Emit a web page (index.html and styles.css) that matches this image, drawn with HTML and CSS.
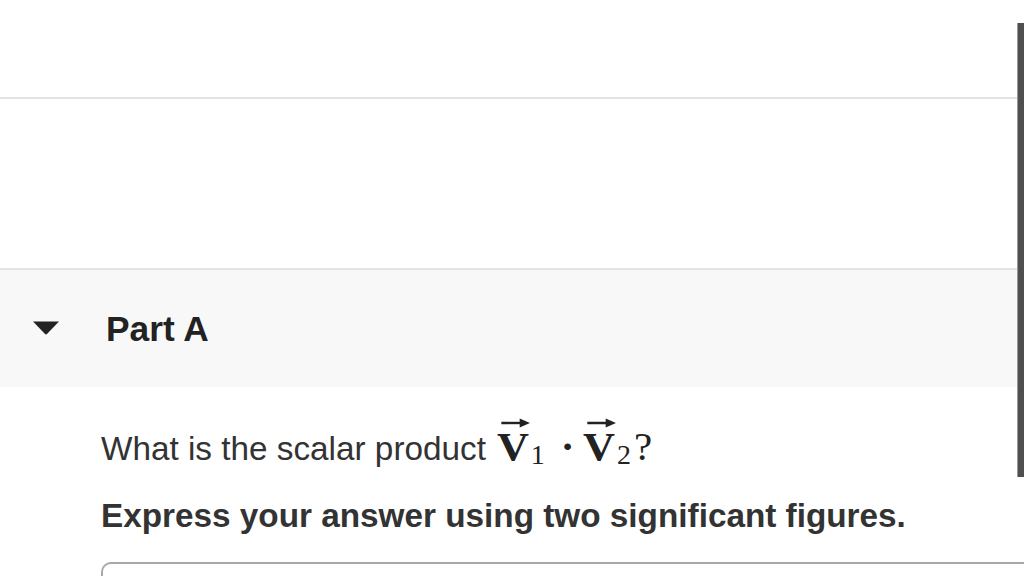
FILE: index.html
```html
<!DOCTYPE html>
<html lang="en">
<head>
<meta charset="utf-8">
<title>Part A</title>
<link rel="stylesheet" href="styles.css">
</head>
<body>
<div class="page">
  <div class="top-area"></div>
  <div class="gap-area"></div>
  <section class="part">
    <div class="part-header">
      <svg class="caret" width="28" height="15" viewBox="0 0 28 15" aria-hidden="true"><path d="M1 1.5 L27 1.5 L15.2 13.8 Q14 15 12.8 13.8 Z" fill="#222"/></svg>
      <h2 class="part-title">Part A</h2>
    </div>
    <div class="part-body">
      <p class="question">What is the scalar product <span class="math"><span class="vec">V<svg class="arrow" width="30" height="10" viewBox="0 0 30 10" aria-hidden="true"><path d="M2 5 H24" stroke="#222" stroke-width="2.4"/><path d="M19 0.5 L28.5 5 L19 9.5 Z" fill="#222"/></svg></span><sub class="sub">1</sub><span class="dot">·</span><span class="vec">V<svg class="arrow" width="30" height="10" viewBox="0 0 30 10" aria-hidden="true"><path d="M2 5 H24" stroke="#222" stroke-width="2.4"/><path d="M19 0.5 L28.5 5 L19 9.5 Z" fill="#222"/></svg></span><sub class="sub">2</sub><span class="qmark">?</span></span></p>
      <p class="instruction">Express your answer using two significant figures.</p>
      <div class="answer-box"></div>
    </div>
  </section>
</div>
<div class="scrollbar"></div>
</body>
</html>
```
FILE: styles.css
```css
html, body {
  margin: 0;
  padding: 0;
  background: #ffffff;
  overflow: hidden;
}
body {
  font-family: "Liberation Sans", Arial, sans-serif;
  color: #333333;
  width: 1024px;
  height: 576px;
  position: relative;
}
.page {
  width: 1024px;
  height: 576px;
  overflow: hidden;
}
.top-area {
  height: 97px;
  border-bottom: 2px solid #e3e3e3;
}
.gap-area {
  height: 169px;
  border-bottom: 2px solid #e3e3e3;
}
.part-header {
  height: 117px;
  background: #f8f8f8;
  display: flex;
  align-items: center;
  padding-left: 32px;
  gap: 46px;
}
.caret {
  display: block;
  margin-top: -2px;
}
.part-title {
  margin: 0;
  font-size: 35.3px;
  font-weight: 700;
  color: #222222;
  line-height: 1;
  padding-top: 1px;
}
.part-body {
  padding: 37px 0 0 101px;
}
.question {
  margin: 0;
  font-size: 33.3px;
  line-height: 50px;
  height: 50px;
  white-space: nowrap;
}
.math {
  font-family: "Liberation Serif", "Times New Roman", serif;
  font-size: 41px;
  line-height: 1;
  color: #222222;
  margin-left: 2px;
}
.vec {
  position: relative;
  font-weight: 700;
  display: inline-block;
  transform: scaleX(1.08);
  transform-origin: left center;
  margin-right: 2px;
}
.arrow {
  position: absolute;
  left: 2px;
  top: -8px;
}
.sub {
  font-size: 28px;
  vertical-align: baseline;
  position: relative;
  top: 4px;
  line-height: 1;
  margin-left: 2px;
}
.dot {
  display: inline-block;
  margin: 0 9px 0 16px;
  font-weight: 700;
}
.qmark {
  margin-left: 3px;
}
.instruction {
  margin: 17px 0 0;
  font-size: 33.3px;
  font-weight: 700;
  line-height: 50px;
  white-space: nowrap;
}
.answer-box {
  margin-top: 21px;
  height: 40px;
  border: 2px solid #a8a8a8;
  border-radius: 10px;
  border-right: none;
  border-top-right-radius: 0;
  border-bottom-right-radius: 0;
}
.scrollbar {
  position: absolute;
  left: 1017px;
  top: 23px;
  width: 7px;
  height: 454px;
  background: #4f4f4f;
  border-left: 1px solid #9a9a9a;
  box-sizing: border-box;
}
```
